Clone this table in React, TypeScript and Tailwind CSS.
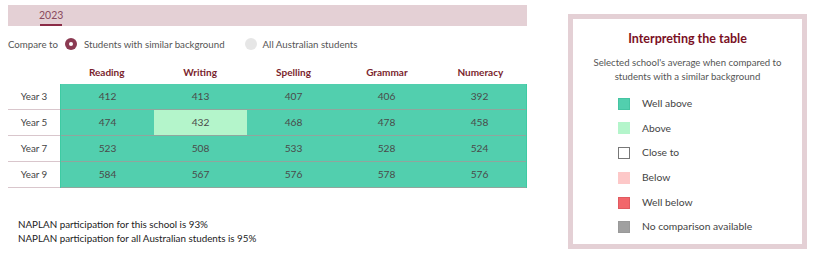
import React from 'react';

const subjects = ['Reading', 'Writing', 'Spelling', 'Grammar', 'Numeracy'];

const rows: { year: string; values: number[]; above?: number }[] = [
  { year: 'Year 3', values: [412, 413, 407, 406, 392] },
  { year: 'Year 5', values: [474, 432, 468, 478, 458], above: 1 },
  { year: 'Year 7', values: [523, 508, 533, 528, 524] },
  { year: 'Year 9', values: [584, 567, 576, 578, 576] },
];

const legend = [
  { label: 'Well above', box: 'bg-[#52cfae] border border-[#45c4a2]' },
  { label: 'Above', box: 'bg-[#b4f5cb]' },
  { label: 'Close to', box: 'bg-white border border-[#777]' },
  { label: 'Below', box: 'bg-[#fdc8c8]' },
  { label: 'Well below', box: 'bg-[#f2666b] border border-[#e05a60]' },
  { label: 'No comparison available', box: 'bg-[#a0a0a0] border border-[#999]' },
];

const App: React.FC = () => {
  return (
    <div className="w-[825px] h-[269px] bg-white flex font-['Lato',sans-serif] text-[#333]">
      <div className="ml-2 mt-[5px] w-[519px] flex flex-col">
        <div className="h-[21px] bg-[#e4d0d5] pl-[30px] flex">
          <div className="flex flex-col items-center pt-[3px]">
            <span className="text-[10.5px] leading-[14px] text-[#8a4a5e] px-[1px]">2023</span>
            <span className="mt-[2px] h-[2px] w-[22px] bg-[#8b2c47]" />
          </div>
        </div>

        <div className="mt-[11px] h-[14px] flex items-center text-[9.7px] text-[#555]">
          <span>Compare to</span>
          <span className="ml-[7px] w-[12px] h-[12px] rounded-full bg-[#8b3a52] flex items-center justify-center">
            <span className="w-[4px] h-[4px] rounded-full bg-white" />
          </span>
          <span className="ml-[7px]">Students with similar background</span>
          <span className="ml-[20px] w-[12px] h-[12px] rounded-full bg-[#e6e6e6]" />
          <span className="ml-[6px]">All Australian students</span>
        </div>

        <div className="mt-[14px] flex h-[14px] items-center">
          <div className="w-[52px]" />
          {subjects.map((s) => (
            <div key={s} className="flex-1 text-center text-[10px] font-bold text-[#7a1f2e]">
              {s}
            </div>
          ))}
        </div>

        <div className="mt-[5px] flex flex-col">
          {rows.map((r) => (
            <div key={r.year} className="flex h-[26px]">
              <div className="w-[52px] flex items-center justify-center text-[9.8px] text-[#444] border-b border-[#d9c6cc]">
                {r.year}
              </div>
              <div className="flex-1 flex border-l border-r border-[#3ecba3]">
                {r.values.map((v, i) => (
                  <div
                    key={i}
                    className={
                      'flex-1 flex items-center justify-center text-[10.2px] text-[#4a4a4a] border-b border-[#90a69d] ' +
                      (r.above === i ? 'bg-[#b4f5cb]' : 'bg-[#52cfae]')
                    }
                  >
                    {v}
                  </div>
                ))}
              </div>
            </div>
          ))}
        </div>

        <div className="mt-[29px] ml-[10px] text-[9.8px] leading-[14px] text-[#222]">
          <p>NAPLAN participation for this school is 93%</p>
          <p>NAPLAN participation for all Australian students is 95%</p>
        </div>
      </div>

      <div className="ml-[41px] mt-[14px] w-[239px] h-[235px] border-[5px] border-[#e4d0d5] bg-white flex flex-col items-center">
        <h2 className="mt-[11px] text-[12.5px] font-bold text-[#7a0f24]">Interpreting the table</h2>
        <p className="mt-[7px] text-[9.6px] leading-[14px] text-[#555] text-center">
          Selected school's average when compared to
          <br />
          students with a similar background
        </p>
        <ul className="mt-[14px] self-start ml-[45px] flex flex-col gap-[12.7px]">
          {legend.map((l) => (
            <li key={l.label} className="flex items-center h-[12px]">
              <span className={'w-[12px] h-[12px] ' + l.box} />
              <span className="ml-[12px] text-[10.3px] text-[#444]">{l.label}</span>
            </li>
          ))}
        </ul>
      </div>
    </div>
  );
};

export default App;
